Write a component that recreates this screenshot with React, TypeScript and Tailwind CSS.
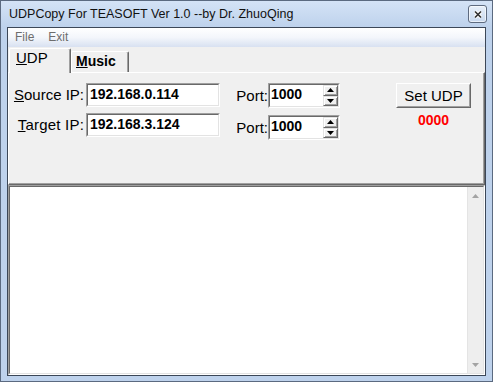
import React from "react";

function Edit({ value, w }: { value: string; w: string }) {
  return (
    <div className={`${w} h-[24px] border border-t-[#a0a0a0] border-l-[#a0a0a0] border-r-white border-b-white`}>
      <div className="h-full border border-t-[#696969] border-l-[#696969] border-r-[#e3e3e3] border-b-[#e3e3e3] bg-white pl-[2px] text-[14px] font-bold leading-[18px]">
        {value}
      </div>
    </div>
  );
}

function SpinBtn({ up }: { up: boolean }) {
  return (
    <div className="flex-1 flex items-center justify-center bg-[#f0f0f0] border border-t-[#e3e3e3] border-l-[#e3e3e3] border-r-[#696969] border-b-[#696969] shadow-[inset_1px_1px_0_#ffffff,inset_-1px_-1px_0_#a0a0a0]">
      <svg width="7" height="4" viewBox="0 0 7 4">
        {up ? <polygon points="3.5,0 7,4 0,4" fill="#000" /> : <polygon points="0,0 7,0 3.5,4" fill="#000" />}
      </svg>
    </div>
  );
}

function Port({ value }: { value: string }) {
  return (
    <div className="flex h-[25px]">
      <div className="w-[34px] text-right text-[15px] leading-[25px]">Port:</div>
      <div className="w-[72px] h-[25px] border border-t-[#a0a0a0] border-l-[#a0a0a0] border-r-white border-b-white">
        <div className="h-full flex border border-t-[#696969] border-l-[#696969] border-r-[#e3e3e3] border-b-[#e3e3e3] bg-white">
          <div className="flex-1 pl-[1px] text-[14px] font-bold leading-[18px]">{value}</div>
          <div className="w-[15px] flex flex-col">
            <SpinBtn up />
            <SpinBtn up={false} />
          </div>
        </div>
      </div>
    </div>
  );
}

export default function App() {
  return (
    <div className="w-[493px] h-[382px] border border-[#5b6a80] bg-[#bed2ec] flex flex-col font-['Liberation_Sans',Arial,sans-serif] text-black overflow-hidden">
      <div className="h-[26px] shrink-0 flex items-center justify-between pl-[8px] pr-[5px] bg-gradient-to-b from-[#d4e3f6] to-[#bed2ec]">
        <span className="text-[12.5px] leading-none text-[#111]">UDPCopy For TEASOFT Ver 1.0 --by Dr. ZhuoQing</span>
        <div className="w-[19px] h-[18px] rounded-[3px] border border-[#5e6b80] bg-gradient-to-b from-[#e8f0fa] to-[#c8d8ee] flex items-center justify-center shadow-[inset_0_0_0_1px_rgba(255,255,255,0.6)]">
          <svg width="10" height="9" viewBox="0 0 10 9">
            <path d="M2 1.5 L8 7.5 M8 1.5 L2 7.5" stroke="#ffffff" strokeWidth="3.6" />
            <path d="M2 1.5 L8 7.5 M8 1.5 L2 7.5" stroke="#333" strokeWidth="1.7" />
          </svg>
        </div>
      </div>
      <div className="mx-[6px] mb-[5px] flex-1 border border-[#3c4757] flex flex-col bg-[#f0f0f0]">
        <div className="h-[19px] shrink-0 flex items-center pl-[7px] gap-[14px] text-[12px] leading-[19px] text-[#6d6d6d] bg-gradient-to-b from-white via-[#f3f6fb] to-[#d8e1f1]">
          <span>File</span>
          <span>Exit</span>
        </div>
        <div className="h-[25px] shrink-0 flex items-end pl-[1px] relative z-10">
          <div className="w-[62px] h-[25px] -mb-[1px] bg-[#f0f0f0] border-l border-t border-r border-l-white border-t-white border-r-[#696969] shadow-[inset_-1px_0_0_#a0a0a0] rounded-t-[2px] pl-[6px] text-[15px] leading-[18px]">
            <span className="underline">U</span>DP
          </div>
          <div className="w-[58px] h-[21px] bg-[#f0f0f0] border-l border-t border-r border-l-white border-t-white border-r-[#696969] shadow-[inset_-1px_0_0_#a0a0a0] rounded-t-[2px] pl-[4px] text-[14px] font-bold leading-[18px]">
            <span className="underline">M</span>usic
          </div>
        </div>
        <div className="h-[113px] shrink-0 border border-t-white border-l-white border-r-[#696969] border-b-[#696969] shadow-[inset_-1px_-1px_0_#a0a0a0] pt-[10px] flex items-start">
          <div className="flex flex-col gap-[6px]">
            <div className="flex h-[24px]">
              <div className="w-[75px] text-right text-[15px] leading-[24px]">
                <span className="underline">S</span>ource IP:
              </div>
              <div className="ml-[2px]">
                <Edit value="192.168.0.114" w="w-[134px]" />
              </div>
            </div>
            <div className="flex h-[24px]">
              <div className="w-[75px] text-right text-[15px] leading-[24px] tracking-[0.2px]">
                <span className="underline">T</span>arget IP:
              </div>
              <div className="ml-[2px]">
                <Edit value="192.168.3.124" w="w-[134px]" />
              </div>
            </div>
          </div>
          <div className="ml-[14px] flex flex-col gap-[7px]">
            <Port value="1000" />
            <Port value="1000" />
          </div>
          <div className="ml-[56px] flex flex-col items-center">
            <div className="w-[75px] h-[25px] border border-t-white border-l-white border-r-[#696969] border-b-[#696969] bg-[#f0f0f0]">
              <div className="h-full border border-t-[#f0f0f0] border-l-[#f0f0f0] border-r-[#a0a0a0] border-b-[#a0a0a0] text-center text-[15px] leading-[21px]">
                Set UDP
              </div>
            </div>
            <div className="mt-[3px] text-[14px] font-bold leading-[18px] text-[#ff0000]">0000</div>
          </div>
        </div>
        <div className="flex-1 flex border border-t-[#a0a0a0] border-l-[#a0a0a0] border-r-white border-b-white">
          <div className="flex-1 flex justify-end border border-t-[#696969] border-l-[#696969] border-r-[#e3e3e3] border-b-[#e3e3e3] bg-white">
            <div className="w-[16px] h-full flex flex-col justify-between bg-[#eeeeee] border-l border-[#e4e4e4]">
              <div className="h-[17px] flex items-center justify-center">
                <svg width="7" height="4" viewBox="0 0 7 4">
                  <polygon points="3.5,0 7,4 0,4" fill="#a3a3a3" />
                </svg>
              </div>
              <div className="h-[17px] flex items-center justify-center">
                <svg width="7" height="4" viewBox="0 0 7 4">
                  <polygon points="0,0 7,0 3.5,4" fill="#a3a3a3" />
                </svg>
              </div>
            </div>
          </div>
        </div>
      </div>
    </div>
  );
}
